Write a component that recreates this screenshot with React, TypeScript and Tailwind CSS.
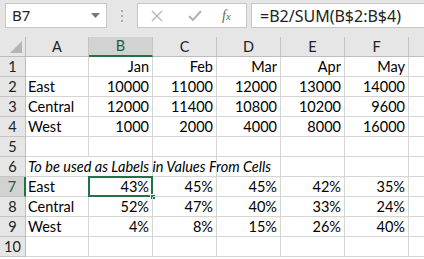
import React from 'react';

const COLS = ['A', 'B', 'C', 'D', 'E', 'F', ''];
const WIDTHS = ['w-[63px]', 'w-[64px]', 'w-[64px]', 'w-[64px]', 'w-[64px]', 'w-[64px]', 'w-[64px]'];

type Cell = { v: string; right?: boolean; italic?: boolean; span?: boolean };

const ROWS: Cell[][] = [
  [{ v: '' }, { v: 'Jan', right: true }, { v: 'Feb', right: true }, { v: 'Mar', right: true }, { v: 'Apr', right: true }, { v: 'May', right: true }],
  [{ v: 'East' }, { v: '10000', right: true }, { v: '11000', right: true }, { v: '12000', right: true }, { v: '13000', right: true }, { v: '14000', right: true }],
  [{ v: 'Central' }, { v: '12000', right: true }, { v: '11400', right: true }, { v: '10800', right: true }, { v: '10200', right: true }, { v: '9600', right: true }],
  [{ v: 'West' }, { v: '1000', right: true }, { v: '2000', right: true }, { v: '4000', right: true }, { v: '8000', right: true }, { v: '16000', right: true }],
  [],
  [{ v: 'To be used as Labels in Values From Cells', italic: true, span: true }],
  [{ v: 'East' }, { v: '43%', right: true }, { v: '45%', right: true }, { v: '45%', right: true }, { v: '42%', right: true }, { v: '35%', right: true }],
  [{ v: 'Central' }, { v: '52%', right: true }, { v: '47%', right: true }, { v: '40%', right: true }, { v: '33%', right: true }, { v: '24%', right: true }],
  [{ v: 'West' }, { v: '4%', right: true }, { v: '8%', right: true }, { v: '15%', right: true }, { v: '26%', right: true }, { v: '40%', right: true }],
  [],
];

const cellFont = { fontFamily: 'Lato, "Noto Sans", sans-serif' };

export default function App() {
  return (
    <div className="w-[424px] h-[259px] overflow-hidden bg-white text-black" style={{ fontFamily: '"Noto Sans", "Open Sans", sans-serif' }}>
      {/* formula bar */}
      <div className="h-[37px] bg-[#e6e6e6] flex items-start pt-[3px] pl-[5px]">
        <div className="w-[102px] h-[25px] bg-white border border-[#c6c6c6] flex items-center justify-between pl-[6px] pr-[6px]">
          <span className="text-[15px] text-[#222]">B7</span>
          <svg width="9" height="5" viewBox="0 0 9 5"><path d="M0 0h9L4.5 5z" fill="#777" /></svg>
        </div>
        <div className="w-[30px] h-[25px] flex flex-col items-center justify-center gap-[3px]">
          <span className="w-[2px] h-[2px] bg-[#aaa]" />
          <span className="w-[2px] h-[2px] bg-[#aaa]" />
          <span className="w-[2px] h-[2px] bg-[#aaa]" />
        </div>
        <div className="w-[110px] h-[25px] bg-white border border-[#c6c6c6] flex items-center">
          <svg className="ml-[13px]" width="12" height="12" viewBox="0 0 12 12"><path d="M1 1l10 10M11 1L1 11" stroke="#b3b3b3" strokeWidth="1.3" /></svg>
          <svg className="ml-[25px]" width="14" height="11" viewBox="0 0 14 11"><path d="M1 6l4 4 8-9" stroke="#b3b3b3" strokeWidth="2" fill="none" /></svg>
          <span className="ml-[20px] text-[14px] italic text-[#666]" style={{ fontFamily: '"Liberation Serif", serif' }}>f<span className="text-[11px]">x</span></span>
        </div>
        <div className="ml-[4px] flex-1 h-[25px] bg-white border border-[#c6c6c6] border-r-0 flex items-center pl-[8px]">
          <span className="text-[16px] text-[#222]">=B2/SUM(B$2:B$4)</span>
        </div>
      </div>

      {/* column headers */}
      <div className="flex h-[20px]" style={cellFont}>
        <div className="w-[26px] h-[20px] bg-[#e6e6e6] border-r border-b border-[#bdbdbd] relative shrink-0">
          <svg className="absolute right-[3px] bottom-[3px]" width="12" height="12" viewBox="0 0 12 12"><path d="M12 0v12H0z" fill="#b5b5b5" /></svg>
        </div>
        {COLS.map((c, i) => (
          <div
            key={i}
            className={`${WIDTHS[i]} shrink-0 h-[20px] flex items-center justify-center text-[14.5px] border-r border-[#c4c4c4] ${
              c === 'B' ? 'bg-[#d2d2d2] border-b-2 border-b-[#217346] text-[#1e5c38]' : 'bg-[#e6e6e6] border-b border-b-[#bdbdbd] text-[#222]'
            }`}
          >
            {c}
          </div>
        ))}
      </div>

      {/* rows */}
      {ROWS.map((row, r) => {
        const sel = r === 6;
        return (
          <div key={r} className="flex h-[20px]" style={cellFont}>
            <div
              className={`w-[26px] shrink-0 h-[20px] flex items-center justify-center text-[14.5px] border-b border-[#c4c4c4] ${
                sel ? 'bg-[#d2d2d2] border-r-2 border-r-[#217346] text-[#1e5c38]' : 'bg-[#e6e6e6] border-r border-r-[#bdbdbd] text-[#222]'
              }`}
            >
              {r + 1}
            </div>
            {COLS.map((c, i) => {
              const cell = row[i];
              const selected = sel && i === 1;
              return (
                <div
                  key={i}
                  className={`${WIDTHS[i]} shrink-0 h-[20px] relative border-b border-[#d4d4d4] ${
                    cell?.span ? '' : 'border-r border-r-[#d4d4d4]'
                  }`}
                >
                  {cell && cell.v && (
                    <span
                      className={`absolute bottom-[0px] text-[14.5px] leading-[19px] whitespace-nowrap ${cell.right ? 'right-[3px]' : 'left-[2px]'} ${
                        cell.italic ? 'italic' : ''
                      }`}
                    >
                      {cell.v}
                    </span>
                  )}
                  {selected && (
                    <>
                      <div className="absolute -left-px -top-px w-[65px] h-[21px] border-2 border-[#217346]" />
                      <div className="absolute right-[-4px] bottom-[-4px] w-[6px] h-[6px] bg-[#217346] border border-white" />
                    </>
                  )}
                </div>
              );
            })}
          </div>
        );
      })}
    </div>
  );
}
